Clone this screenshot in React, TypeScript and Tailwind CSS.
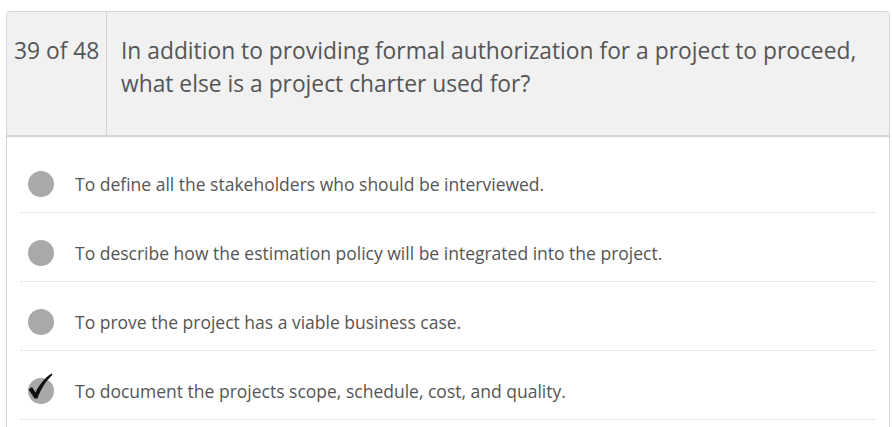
import React from 'react';

const options = [
  { text: 'To define all the stakeholders who should be interviewed.', checked: false },
  { text: 'To describe how the estimation policy will be integrated into the project.', checked: false },
  { text: 'To prove the project has a viable business case.', checked: false },
  { text: 'To document the projects scope, schedule, cost, and quality.', checked: true },
];

const Marker: React.FC<{ checked: boolean }> = ({ checked }) => (
  <div className="relative w-[26px] h-[26px] shrink-0 rounded-full bg-[#a9a9a9]">
    {checked && (
      <svg className="absolute left-0 top-[-5px] overflow-visible" width="27" height="30" viewBox="0 0 27 30">
        <path
          d="M0.5 16.5 L4 14 L7.5 19.5 C11 12 16.5 5 23.5 0.5 L24.5 1.8 C18 8 13 15.5 9.5 25.5 L6.5 25.5 Z"
          fill="#111"
        />
      </svg>
    )}
  </div>
);

const App: React.FC = () => {
  return (
    <div className="w-[892px] h-[427px] overflow-hidden bg-white pt-[11px] pl-[6px]" style={{ fontFamily: '"Open Sans", sans-serif' }}>
      <div className="w-[884px] border border-[#d4d4d4] rounded-t-[4px] text-[#555]">
        <div className="flex bg-[#f1f1f1] border-b-2 border-[#d4d4d4] rounded-t-[4px] h-[125px]">
          <div className="w-[100px] shrink-0 border-r border-[#d4d4d4] pl-[7px] pt-[22px] text-[22.8px] leading-[33px]">
            39 of 48
          </div>
          <div className="pl-[14px] pr-4 pt-[22px] text-[22.8px] leading-[33px]">
            In addition to providing formal authorization for a project to proceed, what else is a project charter used for?
          </div>
        </div>
        <div className="px-[14px] pt-[7px] pb-10">
          {options.map((o) => (
            <div key={o.text} className="flex items-center border-b border-dotted border-[#d6d6d6] h-[69px] pt-[25px] pb-[14px] pl-[7px]">
              <Marker checked={o.checked} />
              <span className="ml-[21px] text-[17.5px] leading-[26px]">{o.text}</span>
            </div>
          ))}
        </div>
      </div>
    </div>
  );
};

export default App;
